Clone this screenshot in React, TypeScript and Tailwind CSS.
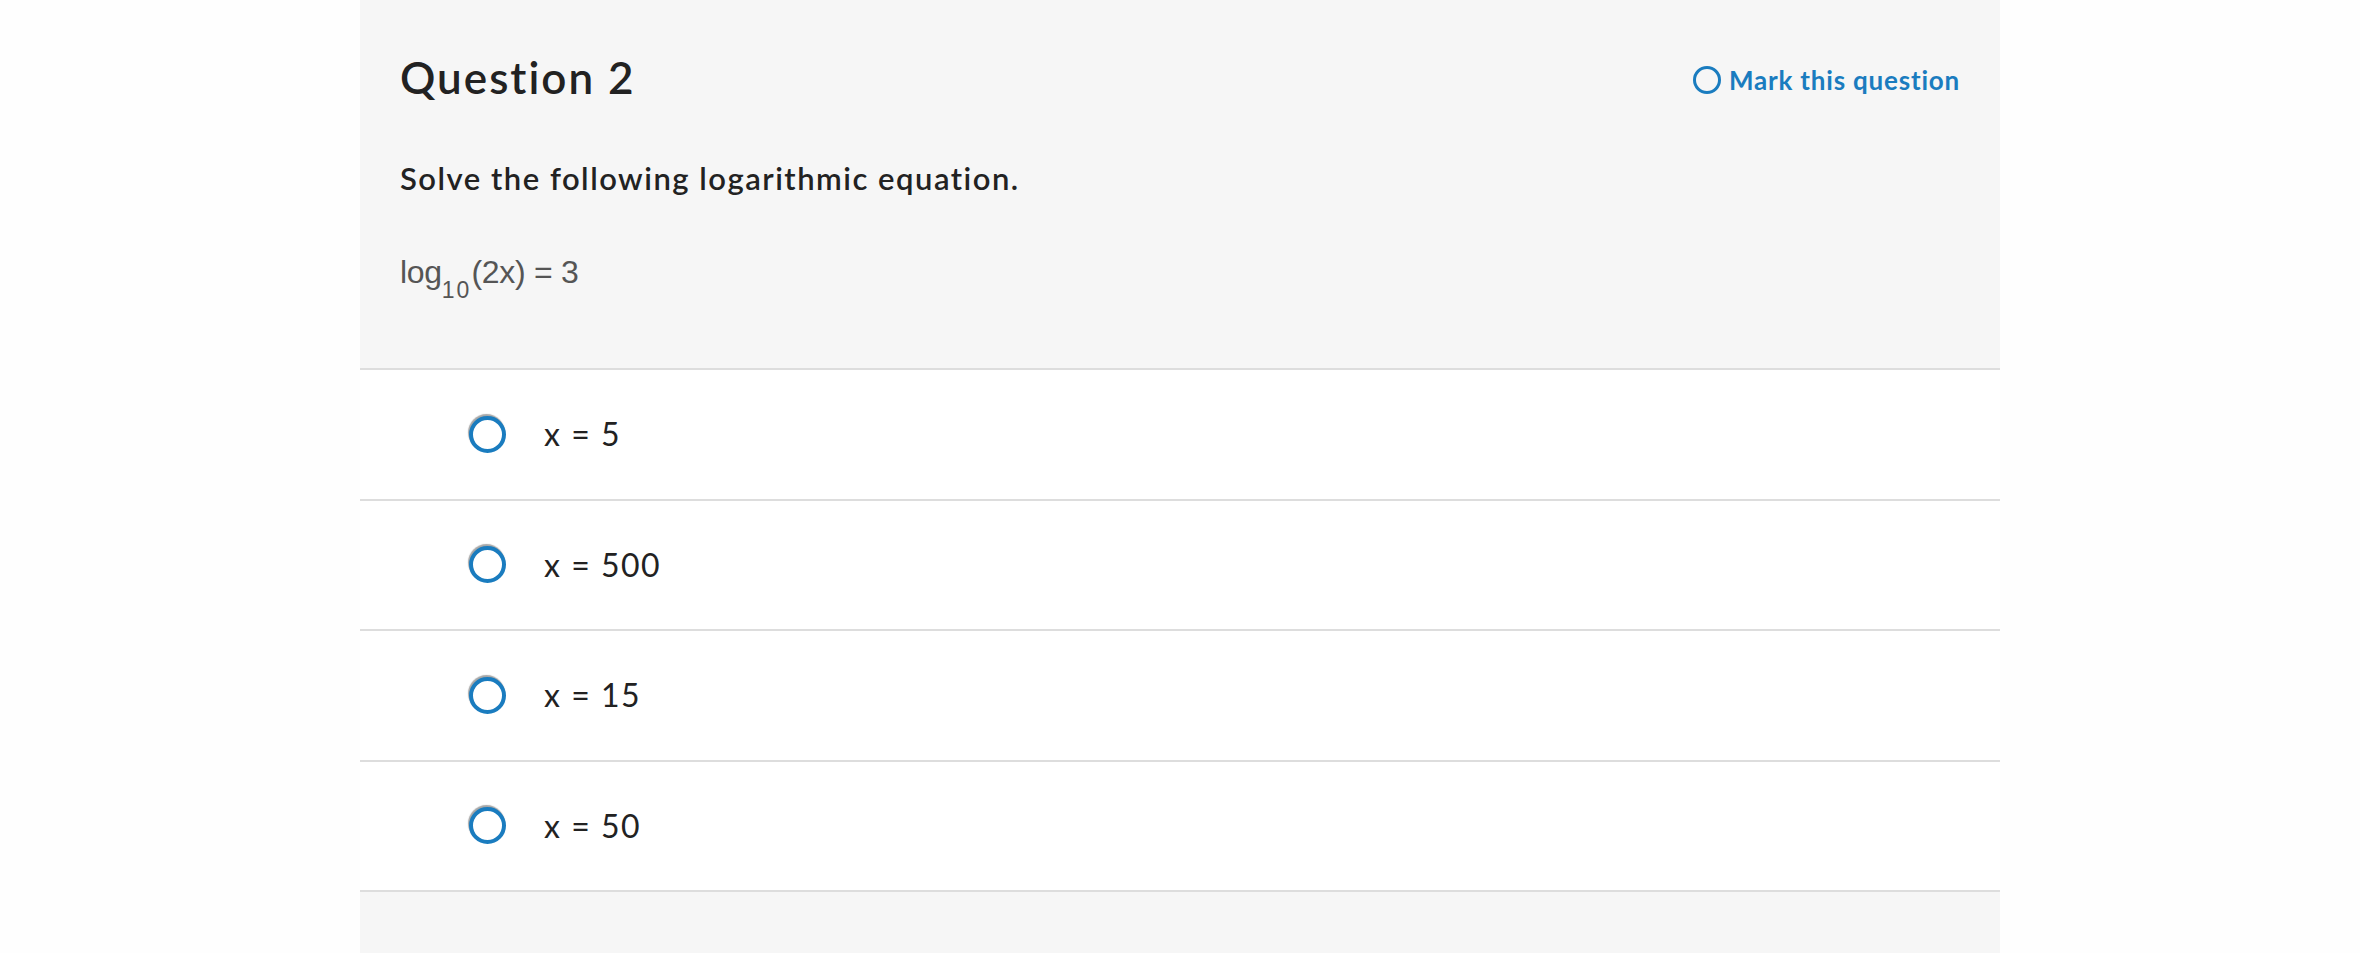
import React from 'react';

const options = ['x = 5', 'x = 500', 'x = 15', 'x = 50'];

function Radio() {
  return (
    <span className="block w-[37px] h-[37px] rounded-full border-[4px] border-[#1a7cbf] bg-white shadow-[-1px_-2px_1px_rgba(0,0,0,0.35)] shrink-0" />
  );
}

export default function App() {
  return (
    <div className="min-h-screen bg-[#fefefe] flex justify-center font-['Lato',sans-serif] text-[#222]">
      <div className="w-[1640px] h-[953px] bg-[#f6f6f6] flex flex-col">
        {/* Question header */}
        <div className="px-10 pt-[50px] h-[370px] border-b-2 border-[#dddddd]">
          <div className="flex items-center justify-between">
            <h1 className="text-[44px] leading-[54px] font-semibold tracking-[2px]">Question 2</h1>
            <button className="flex items-center gap-[8px] text-[#1a7cbf] text-[26px] font-bold leading-none mt-[5px]">
              <span className="block w-[28px] h-[28px] rounded-full border-[3px] border-[#1a7cbf]" />
              <span className="tracking-[0.8px]">Mark this question</span>
            </button>
          </div>
          <p className="mt-[54px] text-[31px] leading-[40px] font-semibold tracking-[1.5px]">
            Solve the following logarithmic equation.
          </p>
          <p className="mt-[54px] font-['Liberation_Sans',sans-serif] text-[32px] leading-[40px] text-[#555] tracking-[-0.3px]">
            log<sub className="text-[23px] align-[-9px] tracking-[2px]">10</sub>(2x) = 3
          </p>
        </div>

        {/* Answer options */}
        <ul className="bg-white">
          {options.map((opt) => (
            <li
              key={opt}
              className="h-[130.5px] border-b-2 border-[#dddddd] flex items-center pl-[109px] gap-[38px]"
            >
              <Radio />
              <span className="text-[32px] leading-none tracking-[1.5px]">{opt}</span>
            </li>
          ))}
        </ul>
      </div>
    </div>
  );
}
